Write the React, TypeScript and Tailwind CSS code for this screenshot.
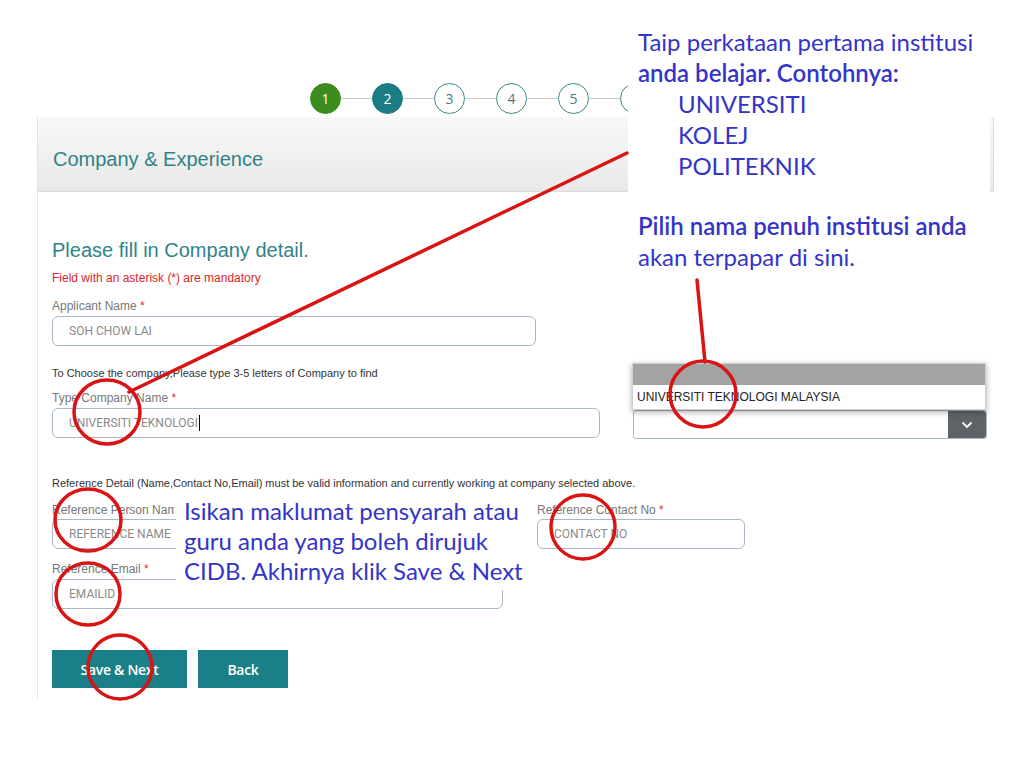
import React from 'react'

const arial = { fontFamily: '"Liberation Sans", Arial, sans-serif' }
const note = { fontFamily: 'Lato, "Open Sans", sans-serif' }

const Step = ({ n, state }: { n: number; state: 'done' | 'active' | 'todo' }) => {
  const cls =
    state === 'done'
      ? 'bg-[#3d8c1e] text-white border-[#3d8c1e]'
      : state === 'active'
        ? 'bg-[#1b7c84] text-white border-[#1b7c84]'
        : 'bg-white text-[#4a7d80] border-[#3a8a8c]'
  return (
    <div
      className={`w-[31px] h-[31px] rounded-full border flex items-center justify-center text-[14px] shrink-0 ${cls}`}
      style={{ fontFamily: '"Open Sans", sans-serif' }}
    >
      {n}
    </div>
  )
}

const Label = ({ text }: { text: string }) => (
  <div className="text-[12px] leading-[16px] text-[#777] whitespace-nowrap" style={arial}>
    {text} <span className="text-[#d33]">*</span>
  </div>
)

const Field = ({ value, w, children }: { value: string; w: string; children?: React.ReactNode }) => (
  <div
    className={`h-[30px] ${w} shrink-0 border border-[#a9b8c8] rounded-[6px] flex items-center pl-[16px] text-[12px] text-[#8a8a8a] uppercase bg-white`}
    style={{ fontFamily: 'Roboto, sans-serif' }}
  >
    {value}
    {children}
  </div>
)

export default function App() {
  const steps: Array<'done' | 'active' | 'todo'> = ['done', 'active', 'todo', 'todo', 'todo', 'todo']
  return (
    <div className="relative w-[1024px] h-[768px] bg-white overflow-hidden">
      {/* stepper */}
      <div className="flex items-center ml-[310px] pt-[83px]">
        {steps.map((s, i) => (
          <React.Fragment key={i}>
            {i > 0 && <div className="w-[31px] h-px bg-[#c9c9c9]" />}
            <Step n={i + 1} state={s} />
          </React.Fragment>
        ))}
      </div>

      {/* panel */}
      <div className="ml-[37px] mt-[3px] w-[957px] border-l border-[#e2e2e2]">
        <div className="h-[75px] bg-gradient-to-b from-[#f8f8f8] to-[#e9e9e9] border-b border-r border-[#dcdcdc] flex items-center px-[15px] pt-[9px]">
          <span className="text-[20px] text-[#2f8388]" style={arial}>
            Company &amp; Experience
          </span>
        </div>

        <div className="pl-[14px] pb-[10px]" style={arial}>
          <div className="mt-[46px] text-[20px] leading-[24px] text-[#2f8388]">Please fill in Company detail.</div>
          <div className="mt-[8px] text-[12px] leading-[16px] text-[#e0262c]">Field with an asterisk (*) are mandatory</div>

          <div className="mt-[12px]">
            <Label text="Applicant Name" />
          </div>
          <div className="mt-[2px]">
            <Field value="SOH CHOW LAI" w="w-[484px]" />
          </div>

          <div className="mt-[19px] text-[11px] leading-[16px] text-[#333]">
            To Choose the company,Please type 3-5 letters of Company to find
          </div>
          <div className="mt-[9px]">
            <Label text="Type Company Name" />
          </div>
          <div className="mt-[2px] flex items-start gap-[33px]">
            <Field value="UNIVERSITI TEKNOLOGI" w="w-[548px]">
              <span className="ml-[1px] w-px h-[16px] bg-black" />
            </Field>
            <div className="mt-[2px] w-[354px] shrink-0 h-[29px] border border-[#a9b8c8] rounded-[3px] flex justify-end bg-white">
              <div className="w-[38px] h-full bg-[#5f6368] rounded-r-[3px] flex items-center justify-center">
                <svg width="12" height="8" viewBox="0 0 12 8">
                  <path d="M1.5 1.5 L6 6 L10.5 1.5" fill="none" stroke="#fff" strokeWidth="1.8" />
                </svg>
              </div>
            </div>
          </div>

          <div className="mt-[36px] text-[11px] leading-[16px] text-[#333]">
            Reference Detail (Name,Contact No,Email) must be valid information and currently working at company selected above.
          </div>

          <div className="mt-[11px] flex gap-[15px]">
            <div>
              <div className="w-[122px] overflow-hidden">
                <Label text="Reference Person Name" />
              </div>
              <div className="mt-[1px]">
                <Field value="REFERENCE NAME" w="w-[470px]" />
              </div>
            </div>
            <div>
              <Label text="Reference Contact No" />
              <div className="mt-[1px]">
                <Field value="CONTACT NO" w="w-[208px]" />
              </div>
            </div>
          </div>

          <div className="mt-[12px]">
            <Label text="Reference Email" />
          </div>
          <div className="mt-[2px]">
            <Field value="EMAILID" w="w-[451px]" />
          </div>

          <div className="mt-[41px] flex gap-[11px]" style={{ fontFamily: '"Open Sans", sans-serif' }}>
            <div className="w-[135px] h-[38px] bg-[#1a7f86] text-white text-[14px] font-semibold flex items-center justify-center tracking-[-0.3px]">
              Save &amp; Next
            </div>
            <div className="w-[90px] h-[38px] bg-[#1a7f86] text-white text-[14px] font-semibold flex items-center justify-center tracking-[-0.3px]">
              Back
            </div>
          </div>
        </div>
      </div>

      {/* dropdown list opened above the select */}
      <div
        className="absolute left-[632px] top-[363px] w-[354px] h-[47px] bg-white border border-[#d0d0d0] shadow-[0_2px_6px_rgba(0,0,0,0.35)]"
        style={arial}
      >
        <div className="h-[21px] bg-[#a3a3a3]" />
        <div className="h-[24px] flex items-center pl-[4px] text-[12px] text-[#222]">UNIVERSITI TEKNOLOGI MALAYSIA</div>
      </div>

      {/* annotation: top right */}
      <div
        className="absolute left-[628px] top-[26px] w-[362px] h-[166px] bg-white pl-[10px] text-[#3434c8] text-[24px] leading-[31px]"
        style={note}
      >
        <div>Taip perkataan pertama institusi</div>
        <div className="font-semibold">anda belajar. Contohnya:</div>
        <div className="pl-[40px]">UNIVERSITI</div>
        <div className="pl-[40px]">KOLEJ</div>
        <div className="pl-[40px]">POLITEKNIK</div>
      </div>
      <div className="absolute left-[638px] top-[210px] text-[#3434c8] text-[24px] leading-[31px]" style={note}>
        <div className="font-semibold">Pilih nama penuh institusi anda</div>
        <div>akan terpapar di sini.</div>
      </div>

      {/* annotation: middle */}
      <div
        className="absolute left-[176px] top-[496px] w-[354px] h-[94px] bg-white pl-[8px] text-[#3434c8] text-[24px] leading-[30px]"
        style={note}
      >
        <div>Isikan maklumat pensyarah atau</div>
        <div>guru anda yang boleh dirujuk</div>
        <div>CIDB. Akhirnya klik Save &amp; Next</div>
      </div>

      {/* red marks */}
      <svg className="absolute left-0 top-0 pointer-events-none" width="1024" height="768" viewBox="0 0 1024 768">
        <g fill="none" stroke="#d81414" strokeWidth="3.5" strokeLinecap="round">
          <line x1="627" y1="153" x2="129" y2="392" />
          <line x1="697" y1="280" x2="705" y2="362" />
          <ellipse cx="107" cy="412" rx="33" ry="32" />
          <ellipse cx="703" cy="394" rx="33" ry="33" />
          <ellipse cx="88" cy="520" rx="33" ry="31" />
          <ellipse cx="583" cy="527" rx="32" ry="32" />
          <ellipse cx="88" cy="594" rx="32" ry="31" />
          <ellipse cx="120" cy="667" rx="32" ry="32" />
        </g>
      </svg>
    </div>
  )
}
